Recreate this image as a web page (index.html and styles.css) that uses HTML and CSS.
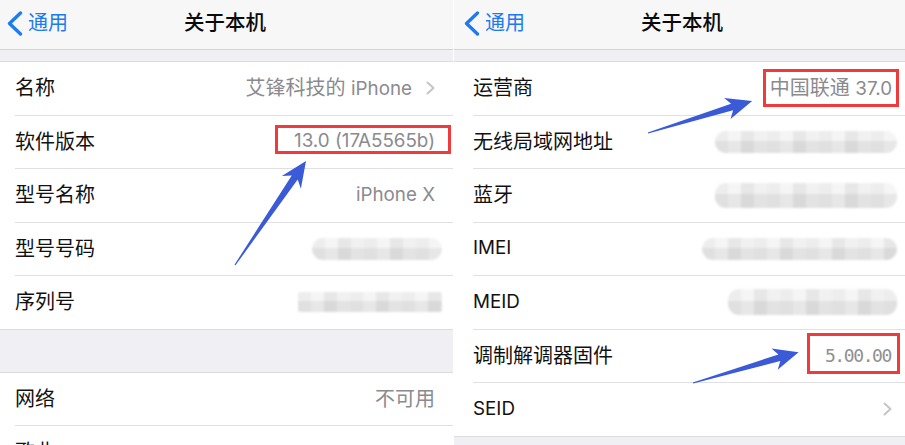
FILE: index.html
```html
<!DOCTYPE html>
<html lang="zh-CN">
<head>
<meta charset="utf-8">
<title>关于本机</title>
<link rel="stylesheet" href="styles.css">
</head>
<body>
<div class="page">
  <section class="screen screen-left">
    <header class="nav">
      <a class="back">
        <svg class="back-chevron" viewBox="0 0 16 25" width="16" height="25"><polyline points="13.5,2 2.5,12.5 13.5,23"/></svg>
        <span>通用</span>
      </a>
      <h1 class="title">关于本机</h1>
    </header>
    <div class="spacer"></div>
    <ul class="group">
      <li class="row"><div class="cell"><span class="label">名称</span><span class="value">艾锋科技的 <span class="lat">iPhone</span></span><svg class="disclosure" viewBox="0 0 9 14" width="9" height="14"><polyline points="1.5,1.5 7.5,7 1.5,12.5"/></svg></div></li>
      <li class="row"><div class="cell"><span class="label">软件版本</span><span class="value lat">13.0 (17A5565b)</span></div></li>
      <li class="row"><div class="cell"><span class="label">型号名称</span><span class="value lat">iPhone X</span></div></li>
      <li class="row"><div class="cell"><span class="label">型号号码</span><span class="masked masked-model"></span></div></li>
      <li class="row"><div class="cell"><span class="label">序列号</span><span class="masked masked-serial"></span></div></li>
    </ul>
    <div class="spacer spacer-tall"></div>
    <ul class="group">
      <li class="row"><div class="cell"><span class="label">网络</span><span class="value">不可用</span></div></li>
      <li class="row"><div class="cell"><span class="label">歌曲</span><span class="value"></span></div></li>
    </ul>
  </section>

  <section class="screen screen-right">
    <header class="nav">
      <a class="back">
        <svg class="back-chevron" viewBox="0 0 16 25" width="16" height="25"><polyline points="13.5,2 2.5,12.5 13.5,23"/></svg>
        <span>通用</span>
      </a>
      <h1 class="title">关于本机</h1>
    </header>
    <div class="spacer"></div>
    <ul class="group">
      <li class="row"><div class="cell"><span class="label">运营商</span><span class="value">中国联通 <span class="lat">37.0</span></span></div></li>
      <li class="row"><div class="cell"><span class="label">无线局域网地址</span><span class="masked masked-wifi"></span></div></li>
      <li class="row"><div class="cell"><span class="label">蓝牙</span><span class="masked masked-bt"></span></div></li>
      <li class="row"><div class="cell"><span class="label lat">IMEI</span><span class="masked masked-imei"></span></div></li>
      <li class="row"><div class="cell"><span class="label lat">MEID</span><span class="masked masked-meid"></span></div></li>
      <li class="row"><div class="cell"><span class="label">调制解调器固件</span><span class="value value-mono">5.00.00</span></div></li>
      <li class="row"><div class="cell"><span class="label lat">SEID</span><span class="value"></span><svg class="disclosure" viewBox="0 0 9 14" width="9" height="14"><polyline points="1.5,1.5 7.5,7 1.5,12.5"/></svg></div></li>
    </ul>
    <div class="spacer"></div>
  </section>

  <!-- callouts drawn over both screens -->
  <svg class="callouts" width="905" height="445" viewBox="0 0 905 445">
    <g class="frames">
      <rect x="276.5" y="126.5" width="173" height="26"/>
      <rect x="764.5" y="70.5" width="133" height="35"/>
      <rect x="808.5" y="334.5" width="90" height="38"/>
    </g>
    <g class="arrows">
      <polygon transform="translate(235 265) rotate(-55.7)" points="0,-0.6 106,-3.6 100,-11.5 126,0 100,11.5 106,3.6 0,0.6"/>
      <polygon transform="translate(648 133) rotate(-17.1)" points="0,-0.6 88,-3.4 83,-11 109,0 83,11 88,3.4 0,0.6"/>
      <polygon transform="translate(693 383) rotate(-16.3)" points="0,-0.6 90,-3.4 85,-11 110,0 85,11 90,3.4 0,0.6"/>
    </g>
  </svg>
</div>
</body>
</html>
```

FILE: styles.css
```css
* {
  box-sizing: border-box;
}

html, body {
  margin: 0;
  padding: 0;
  background: #ffffff;
}

body {
  font-family: "Inter", "Noto Sans CJK SC", sans-serif;
  color: #111111;
}

.page {
  position: relative;
  width: 905px;
  height: 445px;
  overflow: hidden;
  display: flex;
  gap: 1px;
}

.screen {
  height: 445px;
  overflow: hidden;
  background: #efeff4;
  display: flex;
  flex-direction: column;
}

.screen-left {
  width: 453px;
  --inset: 15px;
  --trail: 18px;
}

.screen-right {
  width: 451px;
  --inset: 19px;
  --trail: 13px;
}

/* navigation bar */
.nav {
  height: 50px;
  flex: none;
  background: #f7f7f7;
  border-bottom: 1px solid #d3d3d6;
  display: grid;
  grid-template-columns: 1fr auto 1fr;
  align-items: center;
  padding: 0 10px 3px 7px;
}

.screen-right .nav {
  padding: 0 5px 3px 10px;
}

.back {
  display: flex;
  align-items: center;
  gap: 5px;
  color: #1d7bf2;
  font-size: 20px;
  line-height: 1;
}

.back-chevron polyline {
  fill: none;
  stroke: #1d7bf2;
  stroke-width: 3.3;
  stroke-linecap: round;
  stroke-linejoin: round;
}

.title {
  margin: 0;
  font-size: 20.5px;
  font-weight: 500;
  line-height: 1;
  color: #0a0a0a;
}

/* grouped table */
.spacer {
  height: 11px;
  flex: none;
}

.spacer-tall {
  height: 42px;
}

.group {
  list-style: none;
  margin: 0;
  padding: 0;
  flex: none;
  background: #ffffff;
  border-top: 1px solid #dcdce0;
  border-bottom: 1px solid #dcdce0;
}

.row {
  padding-left: var(--inset);
}

.cell {
  height: 53.5px;
  display: flex;
  align-items: center;
  padding-right: var(--trail);
  border-bottom: 1px solid #e0e0e4;
  font-size: 20px;
  line-height: 1;
}

.row:last-child .cell {
  border-bottom: none;
  height: 52.5px;
}

.label {
  flex: 1;
  white-space: nowrap;
  color: #111111;
}

.value {
  color: #8a8a8f;
  white-space: nowrap;
}

/* Latin runs sit a little smaller next to CJK glyphs */
.lat {
  font-size: 18.8px;
}

.value-mono {
  font-family: "DejaVu Sans Mono", monospace;
  font-size: 18px;
  letter-spacing: -1.4px;
  margin-right: 1px;
  color: #909094;
}

.disclosure {
  margin-left: 14px;
  flex: none;
}

.disclosure polyline {
  fill: none;
  stroke: #c5c5c9;
  stroke-width: 2;
  stroke-linecap: round;
  stroke-linejoin: round;
}

/* pixelated, redacted values */
.masked {
  display: block;
  height: 22px;
  border-radius: 11px;
  filter: blur(0.9px);
  background:
    repeating-linear-gradient(90deg,
      rgba(0, 0, 0, 0.03) 0 13px,
      rgba(0, 0, 0, 0) 13px 26px,
      rgba(0, 0, 0, 0.06) 26px 39px,
      rgba(0, 0, 0, 0.015) 39px 52px),
    linear-gradient(#f5f5f5 0 45%, #e7e7e7 45% 100%);
}

.masked-model  { width: 130px; margin-right: -7px; }
.masked-serial { width: 144px; margin-right: -7px; height: 20px; border-radius: 2px; }
.masked-wifi   { width: 182px; margin-right: -5px; }
.masked-bt     { width: 182px; margin-right: -5px; height: 25px; }
.masked-imei   { width: 195px; margin-right: -5px; }
.masked-meid   { width: 169px; margin-right: -5px; height: 26px; }

/* annotation layer */
.callouts {
  position: absolute;
  left: 0;
  top: 0;
  pointer-events: none;
}

.frames rect {
  fill: none;
  stroke: #ef3b3b;
  stroke-width: 3;
}

.arrows polygon {
  fill: #3a5ad8;
}
```
